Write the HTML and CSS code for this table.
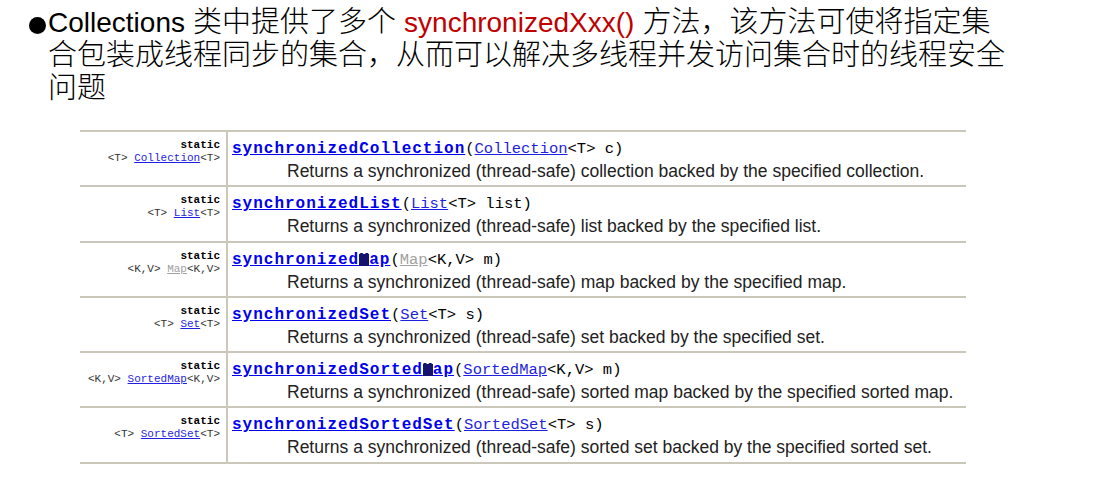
FILE: index.html
```html
<!DOCTYPE html>
<html lang="zh-CN">
<head>
    <meta charset="UTF-8">
    <title>Collections synchronizedXxx()</title>
    <link rel="stylesheet" href="styles.css">
</head>
<body>

    <div class="point">
        <span class="dot"></span>
        <p class="point-text"><span class="en">Collections</span> 类中提供了多个 <span class="en hl">synchronizedXxx()</span> 方法，该方法可使将指定集<br>合包装成线程同步的集合，从而可以解决多线程并发访问集合时的线程安全<br>问题</p>
    </div>

    <table class="api">
        <tr>
            <td class="ret"><span class="mod">static</span><br>&lt;T&gt; <a href="#">Collection</a>&lt;T&gt;</td>
            <td class="sig">
                <div class="decl"><a class="name" href="#">synchronizedCollection</a>(<a href="#">Collection</a>&lt;T&gt; c)</div>
                <div class="desc">Returns a synchronized (thread-safe) collection backed by the specified collection.</div>
            </td>
        </tr>
        <tr>
            <td class="ret"><span class="mod">static</span><br>&lt;T&gt; <a href="#">List</a>&lt;T&gt;</td>
            <td class="sig">
                <div class="decl"><a class="name" href="#">synchronizedList</a>(<a href="#">List</a>&lt;T&gt; list)</div>
                <div class="desc">Returns a synchronized (thread-safe) list backed by the specified list.</div>
            </td>
        </tr>
        <tr>
            <td class="ret"><span class="mod">static</span><br>&lt;K,V&gt; <a class="seen" href="#">Map</a>&lt;K,V&gt;</td>
            <td class="sig">
                <div class="decl"><a class="name" href="#">synchronized<span class="blot">M</span>ap</a>(<a class="seen" href="#">Map</a>&lt;K,V&gt; m)</div>
                <div class="desc">Returns a synchronized (thread-safe) map backed by the specified map.</div>
            </td>
        </tr>
        <tr>
            <td class="ret"><span class="mod">static</span><br>&lt;T&gt; <a href="#">Set</a>&lt;T&gt;</td>
            <td class="sig">
                <div class="decl"><a class="name" href="#">synchronizedSet</a>(<a href="#">Set</a>&lt;T&gt; s)</div>
                <div class="desc">Returns a synchronized (thread-safe) set backed by the specified set.</div>
            </td>
        </tr>
        <tr>
            <td class="ret"><span class="mod">static</span><br>&lt;K,V&gt; <a href="#">SortedMap</a>&lt;K,V&gt;</td>
            <td class="sig">
                <div class="decl"><a class="name" href="#">synchronizedSorted<span class="blot">M</span>ap</a>(<a href="#">SortedMap</a>&lt;K,V&gt; m)</div>
                <div class="desc">Returns a synchronized (thread-safe) sorted map backed by the specified sorted map.</div>
            </td>
        </tr>
        <tr>
            <td class="ret"><span class="mod">static</span><br>&lt;T&gt; <a href="#">SortedSet</a>&lt;T&gt;</td>
            <td class="sig">
                <div class="decl"><a class="name" href="#">synchronizedSortedSet</a>(<a href="#">SortedSet</a>&lt;T&gt; s)</div>
                <div class="desc">Returns a synchronized (thread-safe) sorted set backed by the specified sorted set.</div>
            </td>
        </tr>
    </table>

</body>
</html>
```

FILE: styles.css
```css
/* Page */
body {
    margin: 0;
    background: #fff;
    font-family: "Liberation Sans", "Noto Sans CJK SC", sans-serif;
}

/* Bullet point */
.point {
    display: flex;
    align-items: flex-start;
    padding: 6px 0 0 29px;
}

.dot {
    flex: none;
    width: 17px;
    height: 17px;
    margin-top: 11px;
    margin-right: 2px;
    border-radius: 50%;
    background: #000;
}

.point-text {
    margin: 0;
    font-size: 29px;
    line-height: 33px;
    font-weight: 300;
    color: #000;
}

.en {
    font-size: 28px;
    font-weight: normal;
}

.hl {
    color: #c00000;
}

/* API summary table */
.api {
    border-collapse: collapse;
    margin: 25px 0 0 80px;
    width: 886px;
}

.api tr {
    height: 55.3px;
    border-top: 2px solid #cbc7bb;
}

.api tr:last-child {
    border-bottom: 2px solid #cbc7bb;
}

.api td {
    padding: 0;
    vertical-align: top;
}

.api a {
    color: #1f1fe0;
}

.api a.seen {
    color: #a0a0a0;
}

.ret {
    width: 140px;
    padding: 7px 6px 0 0 !important;
    border-right: 2px solid #cbc7bb;
    text-align: right;
    font-family: "Liberation Mono", monospace;
    font-size: 11px;
    line-height: 13px;
    color: #333;
}

.mod {
    font-weight: bold;
    color: #000;
}

.sig {
    padding: 7px 0 0 4px !important;
}

.decl {
    font-family: "Liberation Mono", monospace;
    font-size: 15.5px;
    line-height: 21px;
    color: #000;
}

.decl .name {
    font-weight: bold;
    font-size: 16px;
    letter-spacing: 1px;
    color: #0000ee;
}

/* the "M" shows up as a filled block in the original */
.blot {
    display: inline-block;
    width: 10px;
    height: 12px;
    line-height: 12px;
    vertical-align: 0;
    background: #14146e;
    color: #14146e;
}

.desc {
    padding-left: 55px;
    font-size: 17.5px;
    line-height: 22px;
    color: #222;
}
```
